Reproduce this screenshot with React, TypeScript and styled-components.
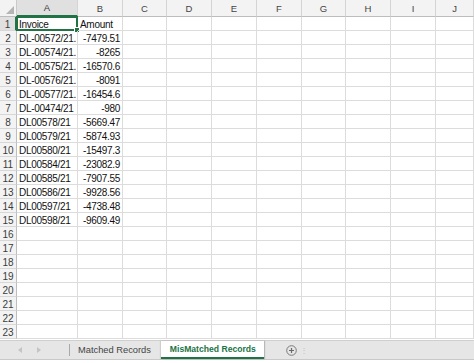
import React from "react";
import styled, { createGlobalStyle, css } from "styled-components";

const Global = createGlobalStyle`
  html, body { margin: 0; padding: 0; background: #ffffff; overflow: hidden; }
  body { font-family: "Liberation Sans", Arial, sans-serif; }
`;

const COLS = ["A", "B", "C", "D", "E", "F", "G", "H", "I", "J"];
const WIDTHS = "17px 61px 45px 44px 45px 45px 45px 44px 45px 45px 1fr";
const ROWS = 23;

const DATA: [string, string][] = [
  ["Invoice", "Amount"],
  ["DL-00572/21.", "-7479.51"],
  ["DL-00574/21.", "-8265"],
  ["DL-00575/21.", "-16570.6"],
  ["DL-00576/21.", "-8091"],
  ["DL-00577/21.", "-16454.6"],
  ["DL-00474/21", "-980"],
  ["DL00578/21", "-5669.47"],
  ["DL00579/21", "-5874.93"],
  ["DL00580/21", "-15497.3"],
  ["DL00584/21", "-23082.9"],
  ["DL00585/21", "-7907.55"],
  ["DL00586/21", "-9928.56"],
  ["DL00597/21", "-4738.48"],
  ["DL00598/21", "-9609.49"],
];

const Page = styled.div`
  width: 474px;
  height: 363px;
  display: flex;
  flex-direction: column;
  overflow: hidden;
`;

const Sheet = styled.div`
  display: grid;
  grid-template-columns: ${WIDTHS};
  grid-template-rows: 17px;
  grid-auto-rows: 14px;
  height: 339px;
  overflow: hidden;
`;

const Corner = styled.div`
  background: #f3f3f3;
  border-right: 1px solid #c9c9c9;
  border-bottom: 1px solid #bdbdbd;
  box-sizing: border-box;
  position: relative;
`;

const CornerTri = styled.svg`
  position: absolute;
  right: 2px;
  bottom: 2px;
`;

const ColHead = styled.div<{ $sel?: boolean }>`
  background: #f3f3f3;
  border-right: 1px solid #d4d4d4;
  border-bottom: 1px solid #bdbdbd;
  box-sizing: border-box;
  display: flex;
  align-items: center;
  justify-content: center;
  font-size: 9.5px;
  color: #444444;
  ${(p) =>
    p.$sel &&
    css`
      background: #e0e0e0;
      color: #3a3a3a;
      border-bottom: 2px solid #217346;
    `}
`;

const RowHead = styled.div<{ $sel?: boolean }>`
  background: #f3f3f3;
  border-right: 1px solid #bdbdbd;
  border-bottom: 1px solid #d7d7d7;
  box-sizing: border-box;
  display: flex;
  align-items: center;
  justify-content: center;
  font-size: 10px;
  color: #3c3c3c;
  padding-top: 1px;
  ${(p) =>
    p.$sel &&
    css`
      background: #e0e0e0;
      border-right: 2px solid #217346;
    `}
`;

const Cell = styled.div<{ $num?: boolean }>`
  border-right: 1px solid #dcdcdc;
  border-bottom: 1px solid #dcdcdc;
  box-sizing: border-box;
  display: flex;
  align-items: center;
  justify-content: ${(p) => (p.$num ? "flex-end" : "flex-start")};
  padding: 1px 2px 0 2px;
  font-size: 10px;
  letter-spacing: -0.3px;
  color: #111111;
  white-space: nowrap;
  overflow: hidden;
  position: relative;
`;

const SelBox = styled.div`
  position: absolute;
  left: -1px;
  top: -1px;
  right: -1px;
  bottom: -1px;
  border: 2px solid #217346;
  pointer-events: none;
`;

const Handle = styled.div`
  position: absolute;
  right: -3px;
  bottom: -3px;
  width: 4px;
  height: 4px;
  background: #217346;
  border: 1px solid #ffffff;
`;

const SelWrap = styled.div`
  position: relative;
  grid-column: 2;
  grid-row: 2;
  border-right: 1px solid #dcdcdc;
  border-bottom: 1px solid #dcdcdc;
  box-sizing: border-box;
  display: flex;
  align-items: center;
  padding: 1px 2px 0 2px;
  font-size: 10px;
  letter-spacing: -0.3px;
  color: #111111;
`;

const TabBar = styled.div`
  height: 24px;
  display: flex;
  flex-direction: column;
`;

const TabStrip = styled.div`
  height: 20px;
  margin-top: 1px;
  background: #e6e6e6;
  border-top: 1px solid #cfcfcf;
  border-bottom: 1px solid #c9c9c9;
  display: flex;
  align-items: stretch;
  box-sizing: border-box;
`;

const Nav = styled.div`
  width: 70px;
  display: flex;
  align-items: center;
  padding-left: 18px;
  gap: 15px;
  box-sizing: border-box;
  border-right: 1px solid #a9a9a9;
  margin: 3px 0;
`;

const Arrow = styled.svg`
  display: block;
`;

const Tab = styled.div<{ $active?: boolean }>`
  display: flex;
  align-items: center;
  font-size: 9.3px;
  color: #444444;
  white-space: nowrap;
  padding: 0 9px 0 8px;
  ${(p) =>
    p.$active &&
    css`
      background: #ffffff;
      color: #217346;
      font-weight: bold;
      font-size: 8.6px;
      padding: 0 8px 0 9px;
      margin-left: 1px;
      box-shadow: 1px 0 1px rgba(0, 0, 0, 0.2), -1px 0 1px rgba(0, 0, 0, 0.1);
      border-bottom: 2px solid #217346;
      box-sizing: border-box;
    `}
`;

const AddBtn = styled.div`
  display: flex;
  align-items: center;
  padding-left: 22px;
`;

const Splitter = styled.div`
  margin-left: auto;
  margin-right: 166px;
  display: flex;
  align-items: center;
  font-size: 8px;
  color: #bdbdbd;
`;

export default function App() {
  const cells: React.ReactNode[] = [];
  cells.push(
    <Corner key="corner">
      <CornerTri width="8" height="8" viewBox="0 0 8 8">
        <polygon points="8,0 8,8 0,8" fill="#b4b4b4" />
      </CornerTri>
    </Corner>
  );
  COLS.forEach((c) =>
    cells.push(
      <ColHead key={"h" + c} $sel={c === "A"}>
        {c}
      </ColHead>
    )
  );
  for (let r = 1; r <= ROWS; r++) {
    cells.push(
      <RowHead key={"r" + r} $sel={r === 1}>
        {r}
      </RowHead>
    );
    COLS.forEach((c, ci) => {
      const row = DATA[r - 1];
      let text = "";
      let num = false;
      if (row && ci < 2) {
        text = row[ci];
        num = ci === 1 && r > 1;
      }
      if (r === 1 && ci === 0) {
        cells.push(
          <SelWrap key={"c" + r + c}>
            {text}
            <SelBox />
            <Handle />
          </SelWrap>
        );
      } else {
        cells.push(
          <Cell key={"c" + r + c} $num={num}>
            {text}
          </Cell>
        );
      }
    });
  }

  return (
    <>
      <Global />
      <Page>
        <Sheet>{cells}</Sheet>
        <TabBar>
          <TabStrip>
            <Nav>
              <Arrow width="4" height="6" viewBox="0 0 4 6">
                <polygon points="4,0 4,6 0,3" fill="#c4c4c4" />
              </Arrow>
              <Arrow width="4" height="6" viewBox="0 0 4 6">
                <polygon points="0,0 0,6 4,3" fill="#c4c4c4" />
              </Arrow>
            </Nav>
            <Tab>Matched Records</Tab>
            <Tab $active>MisMatched Records</Tab>
            <AddBtn>
              <svg width="11" height="11" viewBox="0 0 11 11">
                <circle cx="5.5" cy="5.5" r="4.8" fill="none" stroke="#7a7a7a" strokeWidth="1" />
                <path d="M5.5 3v5M3 5.5h5" stroke="#6a6a6a" strokeWidth="1.2" />
              </svg>
            </AddBtn>
            <Splitter>⋮</Splitter>
          </TabStrip>
        </TabBar>
      </Page>
    </>
  );
}
